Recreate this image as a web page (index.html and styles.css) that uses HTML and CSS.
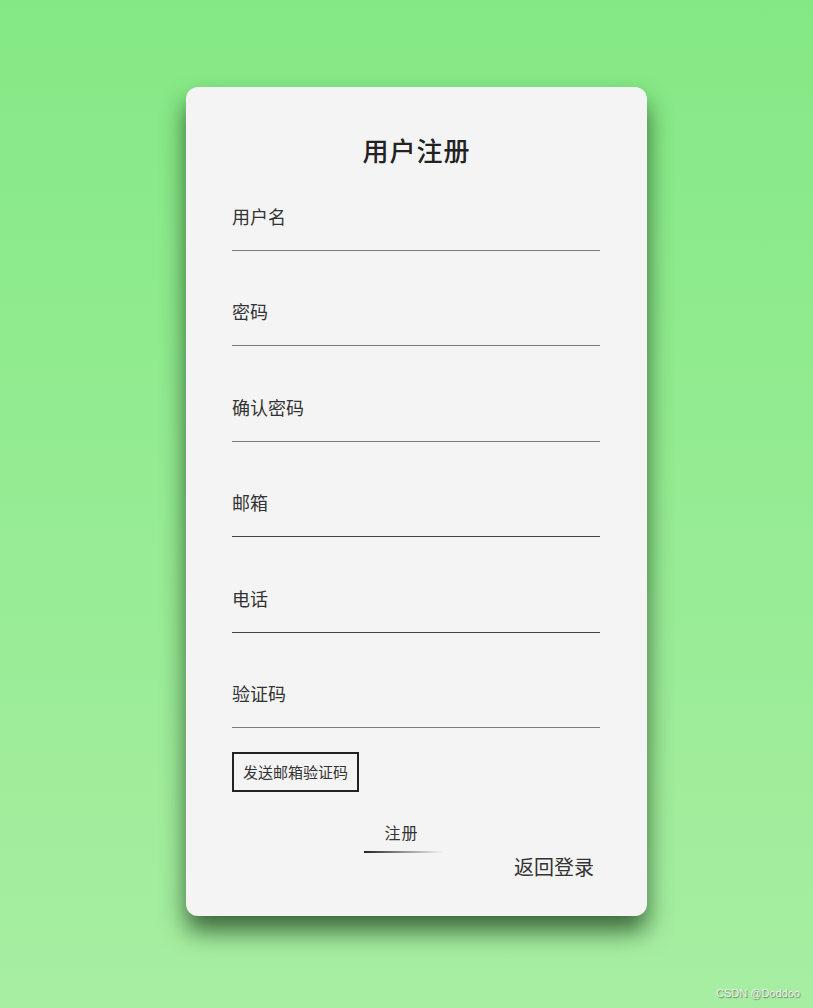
FILE: index.html
```html
<!DOCTYPE html>
<html lang="zh-CN">
<head>
<meta charset="utf-8">
<title>用户注册</title>
<link rel="stylesheet" href="styles.css">
</head>
<body>
<div class="page">
  <div class="card">
    <h1 class="title">用户注册</h1>
    <div class="field"><div class="label">用户名</div><div class="input"></div></div>
    <div class="field"><div class="label">密码</div><div class="input"></div></div>
    <div class="field"><div class="label">确认密码</div><div class="input"></div></div>
    <div class="field"><div class="label">邮箱</div><div class="input dark"></div></div>
    <div class="field"><div class="label">电话</div><div class="input dark"></div></div>
    <div class="field"><div class="label">验证码</div><div class="input"></div></div>
    <div class="send">发送邮箱验证码</div>
    <div class="submit-row"><div class="submit"><span>注册</span><i class="bar"></i></div></div>
    <div class="back-row"><span class="back">返回登录</span></div>
  </div>
</div>
<div class="watermark">CSDN @Doddoo</div>
</body>
</html>
```
FILE: styles.css
```css
html, body {
  margin: 0;
  padding: 0;
}
body {
  width: 813px;
  height: 1008px;
  background: linear-gradient(180deg, #84e984 0%, #a7eea2 100%);
  font-family: "Noto Sans CJK SC", "Noto Sans", sans-serif;
  color: #333;
  position: relative;
  overflow: hidden;
}
.page {
  padding: 87px 0 0 186px;
}
.card {
  box-sizing: border-box;
  width: 461px;
  height: 829px;
  background: #f4f4f4;
  border-radius: 12px;
  box-shadow: 0 15px 25px rgba(10, 40, 10, 0.68);
  padding: 45px 46px 0 46px;
}
.title {
  margin: 0;
  text-align: center;
  font-size: 26px;
  line-height: 36px;
  font-weight: 500;
  color: #222;
  letter-spacing: 1px;
}
.field {
  margin-top: 48.4px;
}
.field:first-of-type {
  margin-top: 36px;
}
.label {
  font-size: 18px;
  line-height: 24px;
  color: #333;
}
.input {
  height: 22px;
  border-bottom: 1px solid #7a7a7a;
  width: 368px;
}
.input.dark {
  border-bottom-color: #444;
}
.send {
  display: inline-flex;
  align-items: center;
  justify-content: center;
  box-sizing: border-box;
  margin-top: 24px;
  width: 127px;
  height: 40px;
  border: 2px solid #222;
  font-size: 15px;
  color: #333;
}
.submit-row {
  margin-top: 30px;
  padding-left: 132px;
}
.submit {
  display: flex;
  flex-direction: column;
  align-items: center;
  width: 79px;
}
.submit span {
  font-size: 16px;
  line-height: 20px;
  letter-spacing: 1px;
  color: #333;
  margin-left: -4px;
}
.bar {
  display: block;
  margin-top: 9px;
  width: 79px;
  height: 2px;
  background: linear-gradient(90deg, #222 0%, #888 45%, rgba(200, 200, 200, 0) 100%);
}
.back-row {
  display: flex;
  justify-content: flex-end;
  padding-right: 7px;
  margin-top: 1px;
}
.back {
  font-size: 20px;
  line-height: 26px;
  color: #333;
}
.watermark {
  position: absolute;
  left: 716px;
  top: 985px;
  font-family: "Liberation Sans", Arial, sans-serif;
  font-size: 11px;
  line-height: 16px;
  color: #f2f2f2;
  text-shadow: 1px 1px 1px rgba(0, 0, 0, 0.45);
}
```
